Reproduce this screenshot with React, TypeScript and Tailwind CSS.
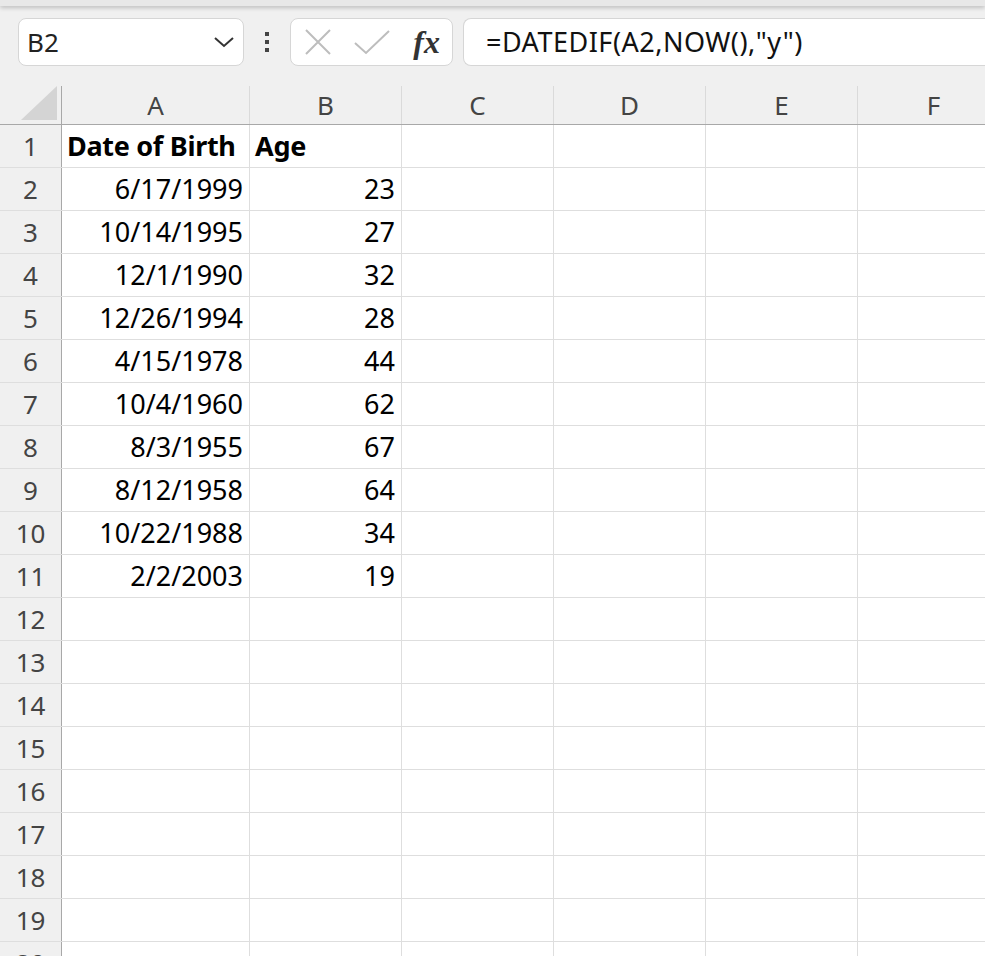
import React from 'react';

const data: [string, string][] = [
  ['6/17/1999', '23'], ['10/14/1995', '27'], ['12/1/1990', '32'], ['12/26/1994', '28'],
  ['4/15/1978', '44'], ['10/4/1960', '62'], ['8/3/1955', '67'], ['8/12/1958', '64'],
  ['10/22/1988', '34'], ['2/2/2003', '19'],
];
const cols = ['A', 'B', 'C', 'D', 'E', 'F'];
const widths = ['w-[188px]', 'w-[152px]', 'w-[152px]', 'w-[152px]', 'w-[152px]', 'w-[152px]'];

export default function App() {
  const rows = Array.from({ length: 20 }, (_, i) => i + 1);
  return (
    <div className="w-[985px] h-[956px] overflow-hidden bg-white" style={{ fontFamily: '"Noto Sans", "Open Sans", sans-serif' }}>
      <div className="bg-[#f0f0f0] h-[86px] flex flex-col">
        <div className="h-[6px] bg-[#e8e8e8] shadow-[0_2px_4px_rgba(0,0,0,0.2)]" />
        <div className="flex items-center mt-[12px] h-[48px]">
          <div className="ml-[18px] w-[226px] shrink-0 h-[48px] bg-white border border-[#d6d6d6] rounded-[8px] flex items-center justify-between px-[8px]">
            <span className="text-[26px] text-[#222]">B2</span>
            <svg width="22" height="14" viewBox="0 0 22 14"><path d="M2 3 L11 11 L20 3" fill="none" stroke="#333" strokeWidth="2" /></svg>
          </div>
          <div className="w-[46px] shrink-0 flex flex-col items-center gap-[4px]">
            <div className="w-[4px] h-[4px] bg-[#444]" />
            <div className="w-[4px] h-[4px] bg-[#444]" />
            <div className="w-[4px] h-[4px] bg-[#444]" />
          </div>
          <div className="w-[163px] shrink-0 h-[48px] bg-white border border-[#d6d6d6] rounded-[8px] flex items-center px-[12px] gap-[20px]">
            <svg width="30" height="30" viewBox="0 0 30 30"><path d="M3 3 L27 27 M27 3 L3 27" stroke="#bdbdbd" strokeWidth="2" /></svg>
            <svg width="38" height="30" viewBox="0 0 38 30"><path d="M2 16 L13 26 L36 4" fill="none" stroke="#bdbdbd" strokeWidth="2" /></svg>
            <span className="text-[32px] italic font-bold text-[#333] ml-auto leading-none" style={{ fontFamily: '"Liberation Serif", serif' }}>fx</span>
          </div>
          <div className="ml-[10px] flex-1 h-[48px] bg-white border border-[#d6d6d6] rounded-l-[8px] border-r-0 flex items-center pl-[22px]">
            <span className="text-[27px] text-[#111] tracking-[0.5px]">=DATEDIF(A2,NOW(),"y")</span>
          </div>
        </div>
      </div>
      <div className="flex h-[39px] bg-[#f0f0f0] border-b border-[#a8a8a8]">
        <div className="w-[62px] shrink-0 border-r border-[#a8a8a8] flex items-end justify-end p-[4px]">
          <svg width="36" height="34" viewBox="0 0 36 34"><path d="M36 0 L36 34 L0 34 Z" fill="#d4d4d4" /></svg>
        </div>
        {cols.map((c, i) => (
          <div key={c} className={`${widths[i]} shrink-0 border-r border-[#dadada] flex items-center justify-center text-[26px] text-[#444]`}>{c}</div>
        ))}
      </div>
      {rows.map(r => (
        <div key={r} className="flex h-[43px] border-b border-[#dedede]">
          <div className="w-[62px] shrink-0 bg-[#f0f0f0] border-r border-[#a8a8a8] flex items-center justify-center text-[26px] text-[#444]">{r}</div>
          {cols.map((c, i) => {
            let txt = '';
            let cls = 'justify-end pr-[6px]';
            if (r === 1 && i < 2) { txt = i === 0 ? 'Date of Birth' : 'Age'; cls = 'justify-start pl-[5px] font-bold tracking-[-0.3px]'; }
            else if (r >= 2 && r <= 11 && i < 2) txt = data[r - 2][i];
            return (
              <div key={c} className={`${widths[i]} shrink-0 border-r border-[#dedede] flex items-center text-[27px] text-black whitespace-nowrap overflow-hidden ${cls}`}>{txt}</div>
            );
          })}
        </div>
      ))}
    </div>
  );
}
